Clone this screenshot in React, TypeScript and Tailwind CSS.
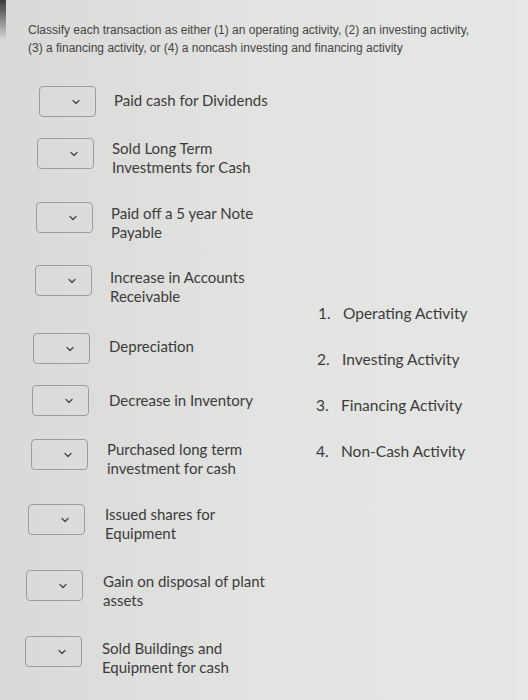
import { ChevronDown } from "lucide-react";

const rows = [
  { h: 52, box: 39, gap: 18, textTop: 5, lines: ["Paid cash for Dividends"] },
  { h: 64, box: 37, gap: 18, textTop: 1, lines: ["Sold Long Term", "Investments for Cash"] },
  { h: 63, box: 36, gap: 18, textTop: 2, lines: ["Paid off a 5 year Note", "Payable"] },
  { h: 68, box: 35, gap: 18, textTop: 3, lines: ["Increase in Accounts", "Receivable"] },
  { h: 52, box: 33, gap: 19, textTop: 4, lines: ["Depreciation"] },
  { h: 54, box: 32, gap: 20, textTop: 6, lines: ["Decrease in Inventory"] },
  { h: 65, box: 31, gap: 19, textTop: 1, lines: ["Purchased long term", "investment for cash"] },
  { h: 66, box: 28, gap: 20, textTop: 1, lines: ["Issued shares for", "Equipment"] },
  { h: 66, box: 26, gap: 20, textTop: 2, lines: ["Gain on disposal of plant", "assets"] },
  { h: 50, box: 25, gap: 20, textTop: 3, lines: ["Sold Buildings and", "Equipment for cash"] },
];

const activities = [
  { n: "1.", label: "Operating Activity", ml: 318 },
  { n: "2.", label: "Investing Activity", ml: 317 },
  { n: "3.", label: "Financing Activity", ml: 316 },
  { n: "4.", label: "Non-Cash Activity", ml: 316 },
];

export default function App() {
  return (
    <div className="relative w-[528px] h-[700px] overflow-hidden bg-gradient-to-r from-[#d9d9d7] via-[#e3e3e1] to-[#e6e6e4] text-[#3b3b3b]">
      <div className="absolute left-0 top-0 w-[6px] h-[40px] bg-gradient-to-b from-[#3a3a40] to-transparent" />
      <div className="absolute right-0 top-0 w-[10px] h-full bg-[#e9e9e8]" />

      <p className="h-[86px] pl-[28px] pr-[30px] pt-[21px] text-[12px] leading-[18px] text-[#444] font-['Liberation_Sans',Arial,sans-serif]">
        Classify each transaction as either (1) an operating activity, (2) an investing activity,
        <br />
        (3) a financing activity, or (4) a noncash investing and financing activity
      </p>

      <div className="flex flex-col font-['Lato','Noto_Sans',sans-serif] text-[15px] leading-[19px]">
        {rows.map((r, i) => (
          <div key={i} className="flex items-start" style={{ height: r.h, marginLeft: r.box }}>
            <div className="w-[57px] h-[31px] shrink-0 rounded-[4px] border border-[#9c9c9a] flex items-center justify-end pr-[13px]">
              <ChevronDown size={12} strokeWidth={2.75} className="text-[#4a4a4a]" />
            </div>
            <div style={{ marginLeft: r.gap, paddingTop: r.textTop }}>
              {r.lines.map((l) => (
                <div key={l}>{l}</div>
              ))}
            </div>
          </div>
        ))}
      </div>

      <div className="absolute left-0 top-[304px] flex flex-col gap-[27px] font-['Lato','Noto_Sans',sans-serif] text-[15.5px] leading-[19px]">
        {activities.map((a) => (
          <div key={a.n} className="flex" style={{ marginLeft: a.ml }}>
            <span className="w-[25px]">{a.n}</span>
            <span>{a.label}</span>
          </div>
        ))}
      </div>
    </div>
  );
}
